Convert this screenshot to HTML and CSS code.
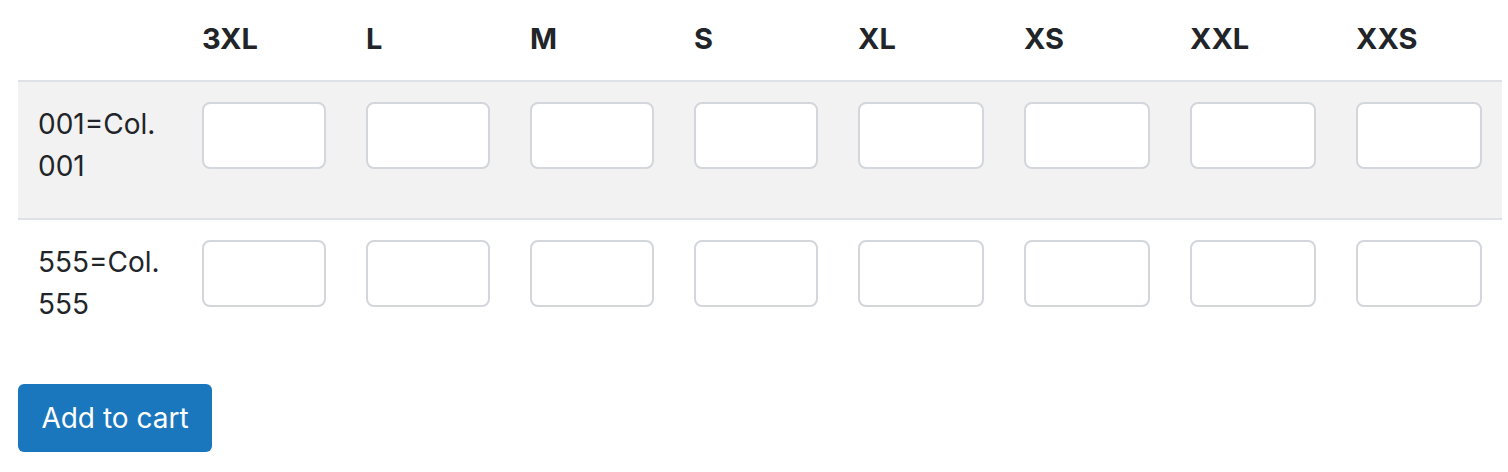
FILE: index.html
```html
<!DOCTYPE html>
<html lang="en">
<head>
<meta charset="utf-8">
<title>Variations</title>
<link rel="stylesheet" href="styles.css">
</head>
<body>
<form class="variations">
  <div class="grid">
    <div class="row head">
      <div class="cell label"></div>
      <div class="cell th">3XL</div>
      <div class="cell th">L</div>
      <div class="cell th">M</div>
      <div class="cell th">S</div>
      <div class="cell th">XL</div>
      <div class="cell th">XS</div>
      <div class="cell th">XXL</div>
      <div class="cell th">XXS</div>
    </div>
    <div class="row body striped">
      <div class="cell label">001=Col. 001</div>
      <div class="cell"><input class="qty" type="text"></div>
      <div class="cell"><input class="qty" type="text"></div>
      <div class="cell"><input class="qty" type="text"></div>
      <div class="cell"><input class="qty" type="text"></div>
      <div class="cell"><input class="qty" type="text"></div>
      <div class="cell"><input class="qty" type="text"></div>
      <div class="cell"><input class="qty" type="text"></div>
      <div class="cell"><input class="qty" type="text"></div>
    </div>
    <div class="row body">
      <div class="cell label">555=Col. 555</div>
      <div class="cell"><input class="qty" type="text"></div>
      <div class="cell"><input class="qty" type="text"></div>
      <div class="cell"><input class="qty" type="text"></div>
      <div class="cell"><input class="qty" type="text"></div>
      <div class="cell"><input class="qty" type="text"></div>
      <div class="cell"><input class="qty" type="text"></div>
      <div class="cell"><input class="qty" type="text"></div>
      <div class="cell"><input class="qty" type="text"></div>
    </div>
  </div>
  <button class="btn" type="button">Add to cart</button>
</form>
</body>
</html>
```
FILE: styles.css
```css
html, body {
  margin: 0;
  padding: 0;
  background: #ffffff;
}

body {
  font-family: Inter, "Liberation Sans", sans-serif;
  font-size: 28px;
  line-height: 42px;
  color: #212529;
}

.variations {
  padding-left: 18px;
  width: 1484px;
}

.row {
  display: grid;
  grid-template-columns: 184px 164px 164px 164px 164px 166px 166px 166px 146px;
}

.head {
  height: 80px;
}

.th {
  font-weight: 700;
  font-size: 29px;
  padding-top: 18px;
}

.body {
  height: 136px;
  border-top: 2px solid #dee2e6;
}

.striped {
  background: #f2f2f2;
}

.cell {
  padding-right: 40px;
}

.cell:last-child {
  padding-right: 20px;
}

.label {
  padding: 21px 20px 0 20px;
}

.body .cell:not(.label) {
  padding-top: 20px;
}

.qty {
  display: block;
  box-sizing: border-box;
  width: 100%;
  height: 67px;
  margin: 0;
  background: #ffffff;
  border: 2px solid #d3d6db;
  border-radius: 8px;
  font: inherit;
}

.btn {
  display: block;
  margin-top: 28px;
  width: 194px;
  height: 68px;
  padding: 0;
  background: #1b77bd;
  color: #ffffff;
  border: 0;
  border-radius: 6px;
  font-family: inherit;
  font-size: 28px;
  line-height: 42px;
}
```
